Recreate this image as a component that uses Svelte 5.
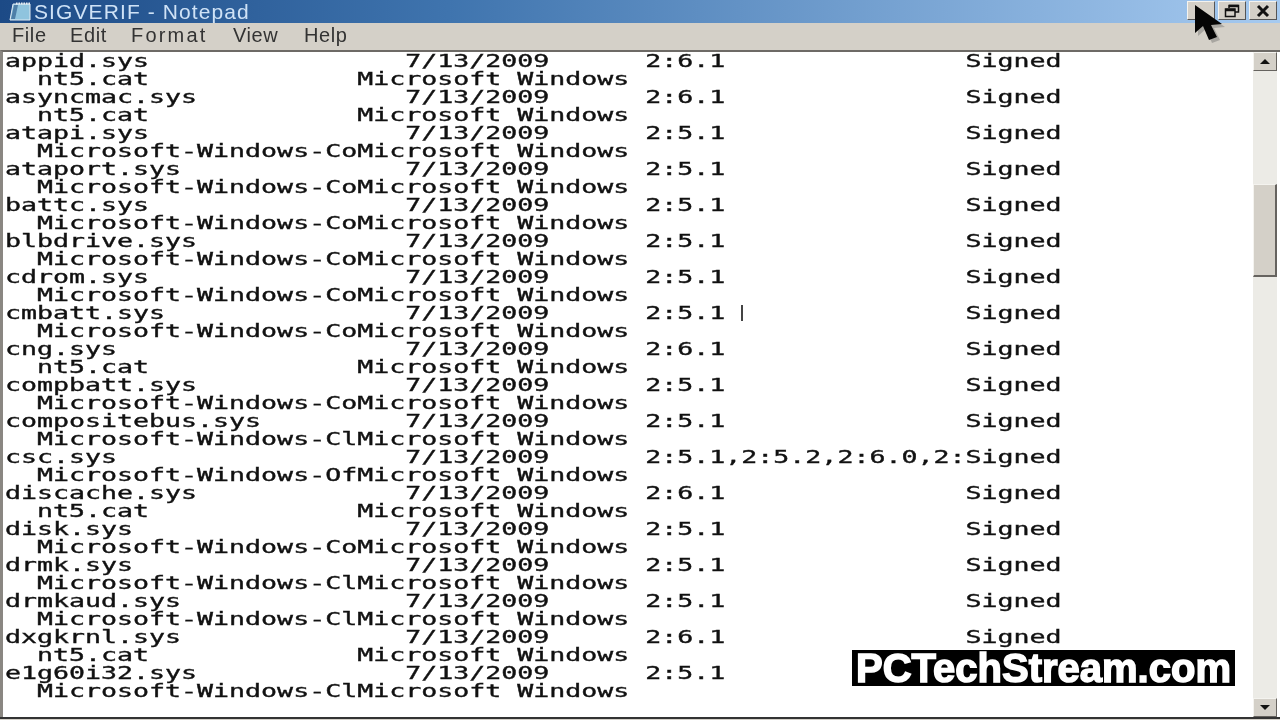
<script>
    const cat = "nt5.cat";
    const co = "Microsoft-Windows-Co";
    const cl = "Microsoft-Windows-Cl";
    const of = "Microsoft-Windows-Of";

    // the last row's status sits behind the watermark, so it is left out
    const files = [
        ["appid.sys", "2:6.1", cat, "Signed"],
        ["asyncmac.sys", "2:6.1", cat, "Signed"],
        ["atapi.sys", "2:5.1", co, "Signed"],
        ["ataport.sys", "2:5.1", co, "Signed"],
        ["battc.sys", "2:5.1", co, "Signed"],
        ["blbdrive.sys", "2:5.1", co, "Signed"],
        ["cdrom.sys", "2:5.1", co, "Signed"],
        ["cmbatt.sys", "2:5.1", co, "Signed"],
        ["cng.sys", "2:6.1", cat, "Signed"],
        ["compbatt.sys", "2:5.1", co, "Signed"],
        ["compositebus.sys", "2:5.1", cl, "Signed"],
        ["csc.sys", "2:5.1,2:5.2,2:6.0,2:", of, "Signed"],
        ["discache.sys", "2:6.1", cat, "Signed"],
        ["disk.sys", "2:5.1", co, "Signed"],
        ["drmk.sys", "2:5.1", cl, "Signed"],
        ["drmkaud.sys", "2:5.1", cl, "Signed"],
        ["dxgkrnl.sys", "2:6.1", cat, "Signed"],
        ["e1g60i32.sys", "2:5.1", cl, ""]
    ];

    const lines = files.flatMap(([name, ver, source, status]) => [
        (name.padEnd(25) + "7/13/2009".padEnd(15) + ver.padEnd(20) + status).trimEnd(),
        ("  " + source).padEnd(22) + "Microsoft Windows"
    ]);

    const menus = ["File", "Edit", "Format", "View", "Help"];
</script>

<div class="window">
    <header class="titlebar">
        <svg class="app-icon" viewBox="0 0 24 20" width="24" height="20">
            <path d="M5 2h17v16H2z" fill="#8fc4de" stroke="#dfeaf2" stroke-width="1"/>
            <path d="M6 3h4l-3 14H3z" fill="#4d7fa8"/>
            <path d="M8 1.500h14" stroke="#e8eef2" stroke-width="2" stroke-dasharray="1.500 1"/>
        </svg>
        <span class="title">SIGVERIF - Notepad</span>
        <div class="controls">
            <div class="ctl"></div>
            <div class="ctl">
                <svg viewBox="0 0 16 14" width="16" height="14" fill="none" stroke="#111" stroke-width="1.500">
                    <path d="M5 4V1.500h9.500V8H11"/>
                    <path d="M1.500 5H11v7.500H1.500z"/>
                    <path d="M5 2h9.500M1.500 6H11" stroke-width="2.500"/>
                </svg>
            </div>
            <div class="ctl">
                <svg viewBox="0 0 14 14" width="14" height="14" stroke="#111" stroke-width="3">
                    <path d="M2 2l10 10M12 2L2 12"/>
                </svg>
            </div>
        </div>
    </header>

    <nav class="menubar">
        {#each menus as menu}
            <span>{menu}</span>
        {/each}
    </nav>

    <main class="editor">
        <div class="text">
            {#each lines as line}
                <div class="line">{line}</div>
            {/each}
        </div>
        <div class="scrollbar">
            <div class="arrow"><i class="up"></i></div>
            <div class="track">
                <div class="thumb"></div>
            </div>
            <div class="arrow"><i class="down"></i></div>
        </div>
    </main>

    <footer class="edge"></footer>

    <div class="caret"></div>
    <div class="watermark"><span>PCTechStream.com</span></div>

    <svg class="pointer" viewBox="0 0 32 42" width="32" height="42">
        <path d="M2 1V29L10 22L16 36L24 33L18 21L29 20Z" fill="#666" opacity="0.4" transform="translate(3 3)"/>
        <path d="M2 1V29L10 22L16 36L24 33L18 21L29 20Z" fill="#050505"/>
    </svg>
</div>

<style>
    :global(body) {
        margin: 0;
        background: #fff;
    }

    .window {
        position: relative;
        width: 1280px;
        height: 720px;
        overflow: hidden;
        display: flex;
        flex-direction: column;
        background: #d4d0c8;
        font-family: "Liberation Sans", sans-serif;
        filter: blur(0.35px);
    }

    .titlebar {
        height: 23px;
        flex: none;
        display: flex;
        align-items: center;
        padding: 0 3px 0 8px;
        background: linear-gradient(to right, #1c4a86, #3f74ae 35%, #a6caf0 100%);
    }

    .app-icon {
        margin-right: 2px;
    }

    .title {
        color: #cfe2f6;
        font-size: 21px;
        letter-spacing: 1.1px;
    }

    .controls {
        margin-left: auto;
        display: flex;
        gap: 3px;
        align-items: flex-start;
        height: 100%;
    }

    .ctl {
        width: 28px;
        height: 19px;
        margin-top: 1px;
        display: flex;
        align-items: center;
        justify-content: center;
        background: #d4d0c8;
        border: 1px solid;
        border-color: #f4f3ef #555 #555 #f4f3ef;
        box-sizing: border-box;
    }

    .menubar {
        height: 27px;
        flex: none;
        display: grid;
        grid-template-columns: 58px 61px 102px 71px auto;
        align-items: center;
        padding: 0 0 2px 12px;
        box-sizing: border-box;
        color: #333;
        font-size: 20px;
        letter-spacing: 0.6px;
    }

    .menubar span:nth-child(3) {
        letter-spacing: 2.200px;
    }

    .editor {
        flex: 1;
        min-height: 0;
        display: flex;
        background: #fff;
        border-top: 2px solid #6d6a66;
        border-left: 3px solid #8a8782;
    }

    .text {
        flex: 1;
        min-width: 0;
        padding-left: 2px;
        color: #111;
    }

    .line {
        width: fit-content;
        height: 18px;
        line-height: 18px;
        white-space: pre;
        font-family: "DejaVu Sans Mono", monospace;
        font-size: 17px;
        -webkit-text-stroke: 0.35px #111;
        transform: scaleX(1.564);
        transform-origin: left center;
    }

    .scrollbar {
        width: 24px;
        margin-right: 3px;
        flex: none;
        display: flex;
        flex-direction: column;
        background: #ecebe6;
    }

    .track {
        flex: 1;
        padding-top: 113px;
    }

    .thumb {
        height: 93px;
        box-sizing: border-box;
        background: #d4d0c8;
        border: 1px solid;
        border-width: 1px 2px 2px 1px;
        border-color: #f4f3ef #66635f #66635f #f4f3ef;
    }

    .arrow {
        height: 19px;
        display: flex;
        align-items: center;
        justify-content: center;
        box-sizing: border-box;
        background: #d4d0c8;
        border: 1px solid;
        border-color: #f4f3ef #66635f #66635f #f4f3ef;
    }

    .arrow i {
        width: 0;
        height: 0;
        border-left: 5px solid transparent;
        border-right: 5px solid transparent;
    }

    .up {
        border-bottom: 5px solid #111;
    }

    .down {
        border-top: 5px solid #111;
    }

    .edge {
        height: 3px;
        flex: none;
        background: #d4d0c8;
        border-top: 2px solid #333;
        box-sizing: border-box;
    }

    .caret {
        position: absolute;
        left: 741px;
        top: 305px;
        width: 2px;
        height: 16px;
        background: #444;
    }

    .watermark {
        position: absolute;
        left: 852px;
        top: 650px;
        width: 383px;
        height: 36px;
        display: flex;
        align-items: center;
        justify-content: center;
        background: #000;
        color: #fff;
        font-size: 40px;
        font-weight: 700;
        line-height: 36px;
        -webkit-text-stroke: 1.500px #fff;
        white-space: nowrap;
    }

    .pointer {
        position: absolute;
        left: 1193px;
        top: 4px;
    }
</style>
